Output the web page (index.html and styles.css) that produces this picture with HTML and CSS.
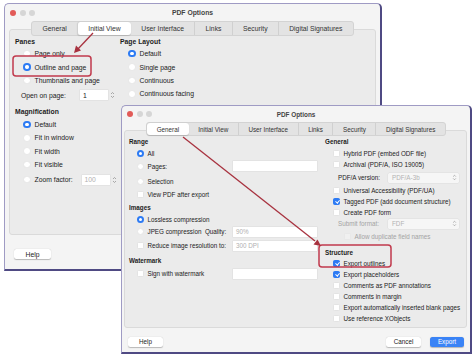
FILE: index.html
```html
<!DOCTYPE html>
<html lang="en">
<head>
    <meta charset="UTF-8">
    <meta name="viewport" content="width=device-width, initial-scale=1.0">
    <title>PDF Options</title>
    <link rel="stylesheet" href="styles.css">
</head>
<body>
<div class="desk">

  <!-- back window: Initial View tab -->
  <div class="window back">
    <div class="titlebar">
      <div class="lights"><i class="red"></i><i></i><i></i></div>
      <div class="title">PDF Options</div>
    </div>
    <div class="tabs">
      <span>General</span><span class="active">Initial View</span><span>User Interface</span><span>Links</span><span>Security</span><span>Digital Signatures</span>
    </div>
    <div class="panel">
      <div class="col col-a">
        <div class="head">Panes</div>
        <div class="row"><i class="radio"></i>Page only</div>
        <div class="row"><i class="radio on"></i>Outline and page</div>
        <div class="row"><i class="radio"></i>Thumbnails and page</div>
        <div class="field plain">
          <span class="label">Open on page:</span>
          <span class="input dark">1</span>
          <svg class="spin" viewBox="0 0 5 10"><path d="M1 4 L2.5 2.5 L4 4 M1 6 L2.5 7.5 L4 6"/></svg>
        </div>
        <div class="head gap">Magnification</div>
        <div class="row"><i class="radio on"></i>Default</div>
        <div class="row"><i class="radio"></i>Fit in window</div>
        <div class="row"><i class="radio"></i>Fit width</div>
        <div class="row"><i class="radio"></i>Fit visible</div>
        <div class="field">
          <i class="radio"></i><span class="label">Zoom factor:</span>
          <span class="input">100</span>
          <svg class="spin" viewBox="0 0 5 10"><path d="M1 4 L2.5 2.5 L4 4 M1 6 L2.5 7.5 L4 6"/></svg>
        </div>
      </div>
      <div class="col col-b">
        <div class="head">Page Layout</div>
        <div class="row"><i class="radio on"></i>Default</div>
        <div class="row"><i class="radio"></i>Single page</div>
        <div class="row"><i class="radio"></i>Continuous</div>
        <div class="row"><i class="radio"></i>Continuous facing</div>
      </div>
    </div>
    <div class="footer">
      <span class="btn">Help</span>
    </div>
  </div>

  <!-- front window: General tab -->
  <div class="window front">
    <div class="titlebar">
      <div class="lights"><i class="red"></i><i></i><i></i></div>
      <div class="title">PDF Options</div>
    </div>
    <div class="tabs">
      <span class="active">General</span><span>Initial View</span><span>User Interface</span><span>Links</span><span>Security</span><span>Digital Signatures</span>
    </div>
    <div class="panel">
      <div class="col col-a">
        <div class="head">Range</div>
        <div class="row"><i class="radio on"></i>All</div>
        <div class="field h15"><i class="radio"></i><span class="label">Pages:</span><span class="input"></span></div>
        <div class="row h15"><i class="radio"></i>Selection</div>
        <div class="row"><i class="check"></i>View PDF after export</div>
        <div class="head gap">Images</div>
        <div class="row"><i class="radio on"></i>Lossless compression</div>
        <div class="field"><i class="radio"></i><span class="label">JPEG compression&nbsp; Quality:</span><span class="input">90%</span></div>
        <div class="field"><i class="check"></i><span class="label">Reduce image resolution to:</span><span class="input">300 DPI</span></div>
        <div class="head gap">Watermark</div>
        <div class="field"><i class="check"></i><span class="label">Sign with watermark</span><span class="input"></span></div>
      </div>
      <div class="col col-b">
        <div class="head">General</div>
        <div class="row"><i class="check"></i>Hybrid PDF (embed ODF file)</div>
        <div class="row h12"><i class="check"></i>Archival (PDF/A, ISO 19005)</div>
        <div class="field sub">
          <span class="label">PDF/A version:</span>
          <span class="select">PDF/A-3b<svg class="chev" viewBox="0 0 5 10"><path d="M1 4 L2.5 2.5 L4 4 M1 6 L2.5 7.5 L4 6"/></svg></span>
        </div>
        <div class="row"><i class="check"></i>Universal Accessibility (PDF/UA)</div>
        <div class="row"><i class="check on"></i>Tagged PDF (add document structure)</div>
        <div class="row"><i class="check"></i>Create PDF form</div>
        <div class="field sub h12 muted">
          <span class="label">Submit format:</span>
          <span class="select">FDF<svg class="chev" viewBox="0 0 5 10"><path d="M1 4 L2.5 2.5 L4 4 M1 6 L2.5 7.5 L4 6"/></svg></span>
        </div>
        <div class="row h14 muted sub2"><i class="check off"></i>Allow duplicate field names</div>
        <div class="head gap3">Structure</div>
        <div class="row"><i class="check on"></i>Export outlines</div>
        <div class="row"><i class="check on"></i>Export placeholders</div>
        <div class="row"><i class="check"></i>Comments as PDF annotations</div>
        <div class="row"><i class="check"></i>Comments in margin</div>
        <div class="row"><i class="check"></i>Export automatically inserted blank pages</div>
        <div class="row"><i class="check"></i>Use reference XObjects</div>
      </div>
    </div>
    <div class="footer">
      <span class="btn">Help</span>
      <span class="spacer"></span>
      <span class="btn">Cancel</span>
      <span class="btn primary">Export</span>
    </div>
  </div>

  <!-- annotation marks -->
  <svg class="marks" width="474" height="357" viewBox="0 0 474 357">
    <rect x="13" y="56" width="78" height="20" rx="3"/>
    <rect x="319" y="245" width="72" height="22" rx="3"/>
    <line x1="93" y1="33" x2="77" y2="50"/>
    <polygon points="74,53 81,50.5 76,45.5"/>
    <line x1="183" y1="137" x2="315" y2="241"/>
    <polygon points="321,246 313.5,244.5 317.5,239.5"/>
  </svg>

</div>
</body>
</html>
```

FILE: styles.css
```css
    body {
        margin: 0;
        background: white;
        font-family: "Liberation Sans", Arial, sans-serif;
        color: #222;
    }

    .desk {
        position: relative;
        width: 474px;
        height: 357px;
        overflow: hidden;
    }

    .window {
        position: absolute;
        box-sizing: border-box;
        display: flex;
        flex-direction: column;
        background: #f4f4f4;
        border: 1px solid #9f9bc4;
        border-right: 2px solid #4f4a83;
        border-bottom: 2px solid #4f4a83;
        border-radius: 5px 5px 0 0;
        overflow: hidden;
    }

    .back {
        left: 4px;
        top: 3px;
        width: 378px;
        height: 268px;
        font-size: 6.8px;
    }

    .front {
        left: 121px;
        top: 105px;
        width: 351px;
        height: 249px;
        font-size: 6.3px;
        z-index: 2;
    }

    /* title bar */
    .titlebar {
        position: relative;
        display: flex;
        align-items: center;
        justify-content: center;
        height: 17px;
        flex: none;
    }

    .front .titlebar {
        height: 16px;
    }

    .lights {
        position: absolute;
        left: 5px;
        top: 0;
        bottom: 0;
        display: flex;
        align-items: center;
        gap: 3.5px;
    }

    .lights i {
        width: 6px;
        height: 6px;
        border-radius: 50%;
        background: #d6d6d6;
    }

    .lights i.red {
        background: #e25b58;
    }

    .title {
        font-weight: bold;
        color: #444;
        font-size: 6.8px;
    }

    .front .title {
        font-size: 6.4px;
    }

    /* tabs */
    .tabs {
        position: relative;
        z-index: 1;
        display: flex;
        align-self: center;
        height: 13px;
        background: #e3e3e3;
        border: 0.5px solid #d3d3d3;
        border-radius: 3px;
        flex: none;
    }

    .front .tabs {
        height: 12px;
    }

    .tabs span {
        display: flex;
        align-items: center;
        padding: 0 10.3px;
        color: #333;
        border-left: 0.5px solid #d0d0d0;
    }

    .front .tabs span {
        padding: 0 9.6px;
    }

    .tabs span:first-child {
        border-left: none;
    }

    .tabs span.active {
        background: white;
        border-radius: 3px;
        box-shadow: 0 0.5px 1px rgba(0,0,0,0.15);
    }

    .tabs span.active + span {
        border-left: none;
    }

    /* content panel */
    .panel {
        display: flex;
        margin: -7px 4px 0 4px;
        padding-top: 5px;
        background: #ebebeb;
        border: 0.5px solid #dadada;
        border-radius: 3px;
        height: 206px;
        box-sizing: border-box;
        flex: none;
    }

    .front .panel {
        margin: -6px 3px 0 2px;
        padding-top: 4.5px;
        height: 198px;
    }

    .col {
        display: flex;
        flex-direction: column;
    }

    .back .col-a {
        width: 110px;
        padding-left: 5px;
        box-sizing: border-box;
    }

    .front .col-a {
        width: 200px;
        padding-left: 4px;
        box-sizing: border-box;
    }

    .head {
        font-weight: bold;
        height: 12px;
        display: flex;
        align-items: center;
        color: #1c1c1c;
    }

    .head.gap {
        margin-top: 2px;
    }

    .head.gap3 {
        margin-top: 3px;
        height: 11px;
    }

    .row, .field {
        display: flex;
        align-items: center;
        padding-left: 8px;
        white-space: nowrap;
    }

    .back .row { height: 13.4px; gap: 4px; }
    .back .field { height: 16.6px; gap: 4px; }
    .front .row { height: 11px; gap: 3.5px; }
    .front .field { height: 14px; gap: 3.5px; }

    .front .h12 { height: 12px; }
    .front .h14 { height: 14px; }
    .front .h15 { height: 15px; }

    .muted { color: #a3a3a3; }

    /* controls */
    .radio {
        flex: none;
        box-sizing: border-box;
        width: 7.5px;
        height: 7.5px;
        border-radius: 50%;
        background: white;
        border: 0.5px solid #e6e6e6;
    }

    .front .radio {
        width: 7px;
        height: 7px;
    }

    .radio.on {
        border: 2.2px solid #2d7bf4;
    }

    .check {
        flex: none;
        position: relative;
        box-sizing: border-box;
        width: 7px;
        height: 7px;
        border-radius: 1.5px;
        background: white;
        border: 0.5px solid #e3e3e3;
    }

    .check.on {
        background: #2d7bf4;
        border-color: #2d7bf4;
    }

    .check.on::after {
        content: "";
        position: absolute;
        left: 1.6px;
        top: 0.4px;
        width: 1.6px;
        height: 3.4px;
        border: solid white;
        border-width: 0 1px 1px 0;
        transform: rotate(40deg);
    }

    .check.off {
        background: #f0f0f0;
        border-color: #e8e8e8;
    }

    .back .field .label {
        width: 43px;
    }

    .back .field.plain {
        padding-left: 6px;
    }

    .back .field.plain .label {
        width: 55px;
    }

    .front .col-a .field .label {
        flex: 1;
    }

    .input {
        display: flex;
        align-items: center;
        box-sizing: border-box;
        height: 10px;
        background: white;
        box-shadow: 0 0 0 0.5px #dcdcdc;
        color: #b0b0b0;
        padding-left: 3px;
    }

    .back .input {
        width: 28px;
    }

    .back .spin {
        margin-left: -2px;
    }

    .input.dark {
        color: #222;
    }

    .front .input {
        width: 84px;
        margin-right: 8px;
    }

    .spin {
        width: 5px;
        height: 10px;
        flex: none;
    }

    .spin path, .chev path {
        fill: none;
        stroke: #8a8a8a;
        stroke-width: 0.7;
    }

    .field.sub {
        padding-left: 13px;
    }

    .field.sub .label {
        width: 46.5px;
    }

    .row.sub2 {
        padding-left: 19px;
    }

    .select {
        display: flex;
        align-items: center;
        justify-content: space-between;
        box-sizing: border-box;
        width: 71px;
        height: 10px;
        padding: 0 2px 0 4px;
        background: #f6f6f6;
        box-shadow: 0 0 0 0.5px #dddddd;
        border-radius: 1.5px;
        color: #b3b3b3;
    }

    .chev {
        width: 5px;
        height: 9px;
    }

    /* footer */
    .footer {
        display: flex;
        align-items: flex-start;
        flex: 1;
        padding: 14px 9px 0 9px;
        gap: 8px;
    }

    .front .footer {
        padding: 9px 6px 0 6px;
        gap: 9px;
    }

    .spacer {
        flex: 1;
    }

    .btn {
        display: flex;
        align-items: center;
        justify-content: center;
        width: 37px;
        height: 10px;
        background: white;
        border-radius: 2.5px;
        box-shadow: 0 0.5px 1px rgba(0,0,0,0.25);
        color: #222;
    }

    .front .btn {
        width: 35px;
        height: 9.5px;
    }

    .front .btn + .btn {
        width: 33px;
    }

    .front .btn.primary {
        width: 34px;
        background: #3a83f6;
        color: white;
    }

    /* annotations */
    .marks {
        position: absolute;
        left: 0;
        top: 0;
        z-index: 5;
        pointer-events: none;
    }

    .marks rect {
        fill: none;
        stroke: #c13a4d;
        stroke-width: 1.5;
    }

    .marks line {
        stroke: #a8323f;
        stroke-width: 1.3;
    }

    .marks polygon {
        fill: #a8323f;
    }
```
